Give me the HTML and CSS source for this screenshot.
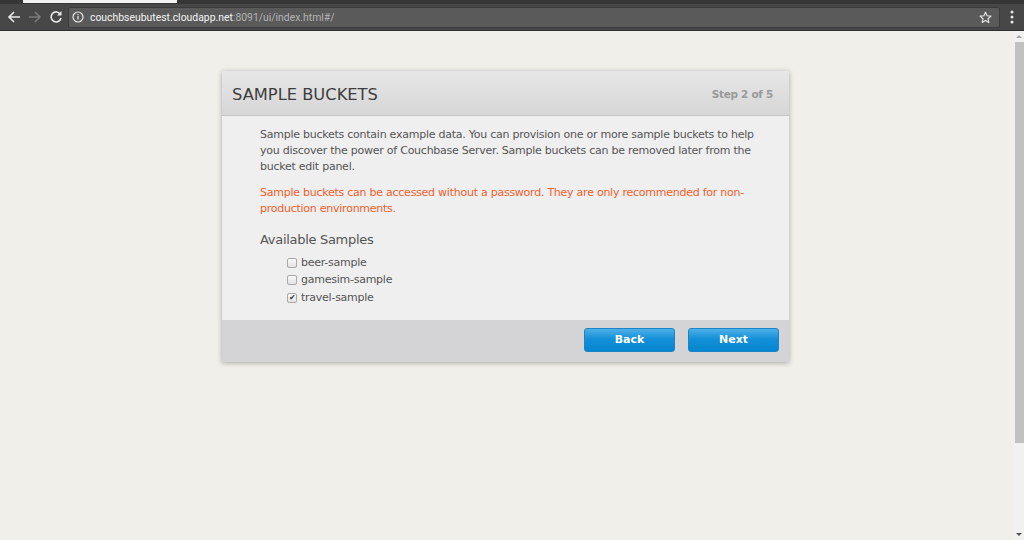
FILE: index.html
```html
<!DOCTYPE html>
<html lang="en">
<head>
    <meta charset="UTF-8">
    <title>Couchbase Setup - Sample Buckets</title>
    <link rel="stylesheet" href="styles.css">
</head>
<body>

    <!-- Browser chrome -->
    <div class="tabstrip">
        <div class="tab"></div>
    </div>
    <div class="toolbar">
        <span class="nav-btn">
            <svg width="14" height="14" viewBox="0 0 14 14"><path d="M13 7H2M7 2L2 7l5 5" fill="none" stroke="#e8e8e8" stroke-width="1.6"/></svg>
        </span>
        <span class="nav-btn">
            <svg width="14" height="14" viewBox="0 0 14 14"><path d="M1 7h11M7 2l5 5-5 5" fill="none" stroke="#7a7a7a" stroke-width="1.6"/></svg>
        </span>
        <span class="nav-btn">
            <svg width="14" height="14" viewBox="0 0 14 14"><path d="M11.5 4.5A5 5 0 1 0 12 8" fill="none" stroke="#e8e8e8" stroke-width="1.6"/><path d="M12.5 1v4.5H8z" fill="#e8e8e8"/></svg>
        </span>
        <div class="omnibox">
            <svg class="info" width="12" height="12" viewBox="0 0 12 12"><circle cx="6" cy="6" r="5" fill="none" stroke="#e8e8e8" stroke-width="1.2"/><rect x="5.4" y="5" width="1.2" height="3.6" fill="#e8e8e8"/><rect x="5.4" y="3" width="1.2" height="1.2" fill="#e8e8e8"/></svg>
            <span class="host">couchbseubutest.cloudapp.net</span><span class="path">:8091/ui/index.html#/</span>
            <svg class="star" width="13" height="13" viewBox="0 0 14 14"><path d="M7 1.2l1.7 3.9 4.2.4-3.2 2.8.9 4.1L7 10.3 3.4 12.4l.9-4.1L1.1 5.5l4.2-.4z" fill="none" stroke="#e8e8e8" stroke-width="1.2" stroke-linejoin="round"/></svg>
        </div>
        <span class="menu-btn">
            <svg width="4" height="14" viewBox="0 0 4 14"><circle cx="2" cy="2" r="1.5" fill="#e8e8e8"/><circle cx="2" cy="7" r="1.5" fill="#e8e8e8"/><circle cx="2" cy="12" r="1.5" fill="#e8e8e8"/></svg>
        </span>
    </div>

    <div class="viewport">
        <div class="page">

            <div class="wizard">
                <div class="wizard-header">
                    <h1>SAMPLE BUCKETS</h1>
                    <span class="step">Step 2 of 5</span>
                </div>

                <div class="wizard-body">
                    <p>Sample buckets contain example data. You can provision one or more sample buckets to help you discover the power of Couchbase Server. Sample buckets can be removed later from the bucket edit panel.</p>
                    <p class="warning">Sample buckets can be accessed without a password. They are only recommended for non-production environments.</p>

                    <h2>Available Samples</h2>
                    <ul class="samples">
                        <li><label><input type="checkbox"> beer-sample</label></li>
                        <li><label><input type="checkbox"> gamesim-sample</label></li>
                        <li><label><input type="checkbox" checked> travel-sample</label></li>
                    </ul>
                </div>

                <div class="wizard-footer">
                    <button>Back</button>
                    <button>Next</button>
                </div>
            </div>

        </div>

        <div class="scrollbar">
            <span class="arrow up"></span>
            <div class="thumb"></div>
            <span class="arrow down"></span>
        </div>
    </div>

</body>
</html>
```

FILE: styles.css
```css
* {
    margin: 0;
    padding: 0;
    box-sizing: border-box;
}

body {
    width: 1024px;
    height: 540px;
    overflow: hidden;
    background: #f1efe9;
    font-family: "DejaVu Sans", Verdana, sans-serif;
}

/* Browser chrome */
.tabstrip {
    height: 4px;
    background: #363636;
    padding-left: 23px;
}

.tab {
    width: 154px;
    height: 3px;
    background: #f2f2f2;
}

.toolbar {
    height: 27px;
    background: #474747;
    border-bottom: 1px solid #2e2e2e;
    display: flex;
    align-items: center;
    padding-left: 3px;
}

.nav-btn {
    width: 21px;
    height: 21px;
    display: flex;
    align-items: center;
    justify-content: center;
}

.omnibox {
    flex: 1;
    height: 21px;
    margin-left: 2px;
    background: #5a5a5a;
    border: 1px solid #3b3b3b;
    border-radius: 2px;
    display: flex;
    align-items: center;
    padding-left: 3px;
    font-family: Roboto, "DejaVu Sans", sans-serif;
    font-size: 10.4px;
}

.omnibox .info {
    margin-right: 6px;
}

.host {
    color: #f4f4f4;
}

.path {
    color: #b4b4b4;
}

.omnibox .star {
    margin-left: auto;
    margin-right: 7px;
}

.menu-btn {
    width: 24px;
    display: flex;
    justify-content: center;
}

/* Page */
.viewport {
    display: flex;
    height: 509px;
}

.page {
    flex: 1;
    padding-top: 40px;
}

.scrollbar {
    width: 10px;
    background: #f1f1f1;
    display: flex;
    flex-direction: column;
    align-items: center;
}

.scrollbar .thumb {
    width: 9px;
    height: 401px;
    margin-left: 1px;
    background: #c1c1c1;
}

.arrow {
    width: 0;
    height: 0;
    border-left: 3px solid transparent;
    border-right: 3px solid transparent;
    margin: 4px 0;
}

.arrow.up {
    border-bottom: 3px solid #a3a3a3;
}

.arrow.down {
    margin-top: auto;
    border-top: 3px solid #505050;
}

/* Wizard panel */
.wizard {
    width: 567px;
    margin-left: 222px;
    background: #efefef;
    box-shadow: 0 1px 5px rgba(0, 0, 0, 0.3);
    color: #555;
}

.wizard-header {
    height: 45px;
    display: flex;
    align-items: center;
    justify-content: space-between;
    padding: 2px 16px 0 10px;
    background: linear-gradient(#e7e7e7, #d6d6d6);
    border-bottom: 1px solid #c4c4c4;
}

.wizard-header h1 {
    font-size: 16.3px;
    font-weight: normal;
    color: #3d3d3d;
}

.step {
    font-size: 10.5px;
    font-weight: bold;
    letter-spacing: -0.3px;
    color: #999;
}

.wizard-body {
    padding: 11px 0 13px 38px;
    font-size: 11px;
    line-height: 16px;
    letter-spacing: -0.25px;
}

.wizard-body p {
    width: 500px;
    margin-bottom: 10px;
}

.wizard-body .warning {
    color: #f0602e;
    margin-bottom: 15px;
}

.wizard-body h2 {
    font-size: 13px;
    font-weight: normal;
    letter-spacing: -0.3px;
    color: #555;
    margin-bottom: 6px;
}

.samples {
    list-style: none;
    padding-left: 27px;
}

.samples li {
    height: 17.5px;
    display: flex;
    align-items: center;
}

.samples label {
    display: flex;
    align-items: center;
    gap: 4px;
}

.samples input {
    appearance: none;
    width: 10px;
    height: 10px;
    margin: 0;
    border: 1px solid #a9a9a9;
    border-radius: 2px;
    background: linear-gradient(#fafafa, #e2e2e2);
    display: flex;
    align-items: center;
    justify-content: center;
}

.samples input:checked::after {
    content: "\2714";
    font-size: 8px;
    line-height: 8px;
    color: #333;
}

.wizard-footer {
    height: 42px;
    background: #d4d4d6;
    display: flex;
    justify-content: flex-end;
    gap: 13px;
    padding: 8px 10px 0 0;
}

button {
    width: 91px;
    height: 24px;
    border: 1px solid #1a85c6;
    border-radius: 3px;
    background: linear-gradient(#4fb0e8, #1490d8 45%, #0485d0);
    color: #fff;
    font-family: "DejaVu Sans", Verdana, sans-serif;
    font-size: 11px;
    font-weight: bold;
    cursor: pointer;
}
```
